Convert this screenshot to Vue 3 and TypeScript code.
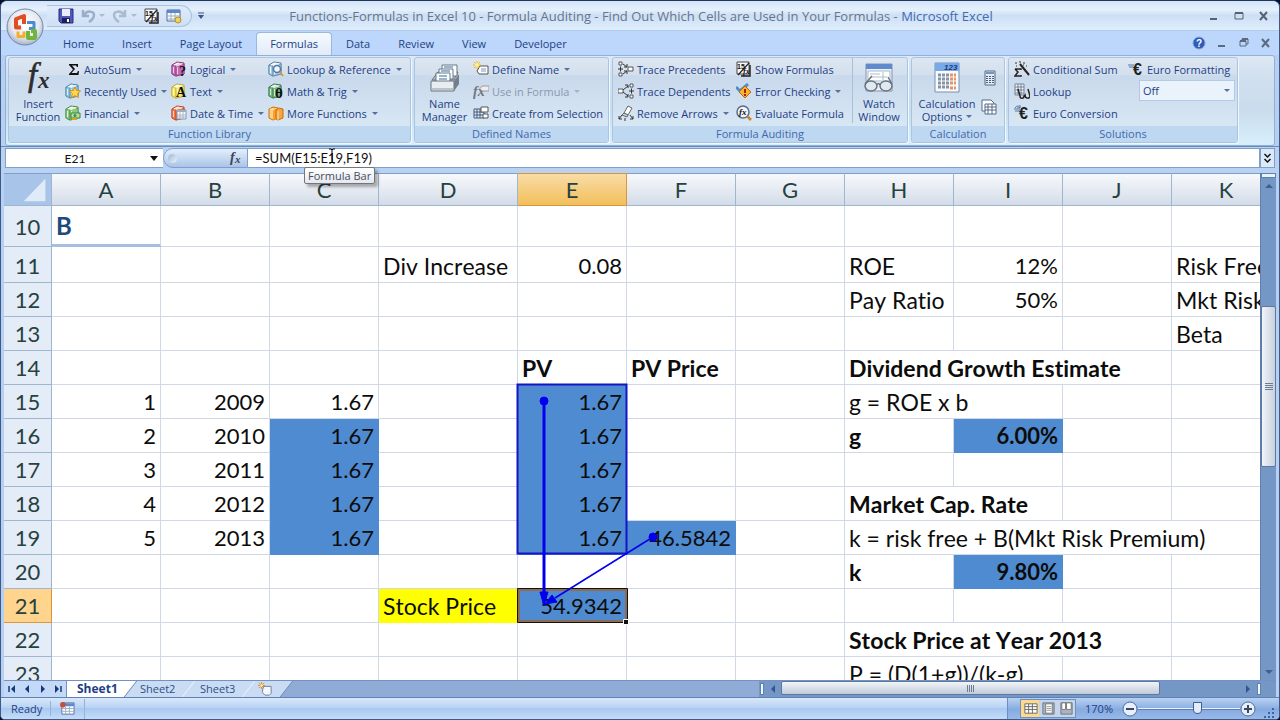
<script setup lang="ts">
import { ref } from 'vue'

interface Command { icon: string; label: string; menu?: boolean; disabled?: boolean }
interface Cell { col: string; text?: string; cls?: string; span?: number }

const book = (face: string, side: string, light: string): string =>
  `<path d="M1 4 6 1 13 2 13 13 5 15 1 13Z" fill="${light}" stroke="${side}"/><path d="M1 4 5 5 5 15 1 13Z" fill="${face}" stroke="${side}" stroke-width=".6"/><path d="M5 5 13 3 13 13 5 15Z" fill="${face}" stroke="${side}" stroke-width=".6"/><path d="M3 4 8 2M5 5 11 3" stroke="#fff" stroke-width=".8"/><path d="M6.500 6v7M2.500 6v6" stroke="${light}"/>`

const euro = `<path d="M0 4h6M1 6h5" stroke="#7f9cc6" stroke-width="1.5"/><text x="5" y="14" font-family="Liberation Sans" font-weight="bold" font-size="16" fill="#222">€</text>`

const showFormulas = `<path d="M1 1h12v12H1z" fill="#f8f8f8" stroke="#444"/><path d="M14 4v11H5" fill="none" stroke="#222" stroke-width="1.5"/><path d="M2 14 13 2" stroke="#222" stroke-width="1.2"/><text x="1" y="8" font-family="Liberation Sans" font-weight="bold" font-size="7" fill="#111">15</text><text x="7" y="13" font-family="Liberation Serif" font-style="italic" font-weight="bold" font-size="8" fill="#111">fx</text>`

const icons: Record<string, string> = {
  sum: `<path d="M4 3h9v3h-1l-1-1.500H7L10 8l-3.500 4H12l1-2h1l-.5 4H4v-1l4-4.500L4 4Z" fill="#111"/>`,
  recent: book('#8fc6e8', '#4287ab', '#d8f0fb') + `<path d="m10 4 1.600 3.400 3.900.5-2.800 2.700.7 3.900L10 12.700l-3.500 1.800.7-3.900L4.500 7.900l3.900-.5Z" fill="#ffd94a" stroke="#d78a14"/>`,
  financial: book('#8ccc7c', '#43884a', '#dff5d6') + `<path d="M6 8h9v5H6z" fill="#b8e0a4" stroke="#3d8241"/><circle cx="10" cy="10.500" r="1.500" fill="#448b48"/><path d="M7 14h5" stroke="#dca31e" stroke-width="2"/>`,
  logical: book('#c66ab5', '#853879', '#efc9e8') + `<text x="8" y="15" font-family="Liberation Serif" font-weight="bold" font-size="14" fill="#111">?</text>`,
  text: book('#f5eb62', '#bda82a', '#fffbc9') + `<text x="5" y="14" font-family="Liberation Serif" font-weight="bold" font-size="14" fill="#111">A</text>`,
  date: book('#f27b4c', '#c44222', '#ffd0b7') + `<path d="M6 5h9v9H6z" fill="#fff" stroke="#8095b1"/><path d="M6 6h9" stroke="#a4abba" stroke-width="2"/><path d="M9 7v7M12 7v7M6 10h9M6 12h9" stroke="#a7b6c9"/>`,
  lookup: book('#a9c9e7', '#527da5', '#edf7ff') + `<circle cx="9" cy="8" r="3.500" fill="#eaf7ff" stroke="#56789e" stroke-width="1.500"/><path d="m12 11 3 4" stroke="#d49b38" stroke-width="2"/>`,
  math: book('#76b484', '#34764b', '#cde8d1') + `<text x="7" y="15" font-family="Liberation Serif" font-weight="bold" font-size="15" fill="#111">θ</text>`,
  more: `<path d="m1 4 4-2 5 1v10l-5 2-4-2Z" fill="#ffd182" stroke="#c96d0b"/><path d="m5 5 5-2v10l-5 2Z" fill="#f8a032"/><path d="m8 5 3-2 4 1v9l-5 2-2-1Z" fill="#f6a640" stroke="#c96d0b"/><path d="M10 6v9M2 4l4 1" stroke="#ffe0a5"/>`,
  define: `<path d="M7 5h8v8H6L4 10Z" fill="#fff" stroke="#555"/><path d="M8 8h5M8 10h5" stroke="#7896c0"/><path d="M4 0v8M0 4h8M1 1l6 6M7 1 1 7" stroke="#efb822"/><circle cx="4" cy="4" r="2" fill="#fff18b"/>`,
  use: `<text x="0" y="13" font-family="Liberation Serif" font-style="italic" font-weight="bold" font-size="14" fill="#70767f">fx</text><path d="M9 3h7v5H9L7 5.500Z" fill="#eee" stroke="#999"/>`,
  create: `<path d="M1 4h10v9H1z" fill="#dfe8f5" stroke="#445a78"/><path d="M1 7h10M1 10h10M4 4v9M7 4v9" stroke="#445a78"/><path d="M8 2h7v5H8z" fill="#fff" stroke="#555"/><path d="M10 9h5v4h-5z" fill="#fff" stroke="#555"/>`,
  precedents: `<path d="M1 1h3v3H1zM1 12h3v3H1zM10 6h5v4h-5z" fill="#fff" stroke="#555"/><path d="M0 8h5M2.500 5.500v5M5 3l4 3M5 13l4-3M9 3v3H6M9 13v-3H6" fill="none" stroke="#333"/>`,
  dependents: `<path d="M12 1h3v3h-3zM12 12h3v3h-3zM0 6h5v4H0z" fill="#fff" stroke="#555"/><path d="M11 8h5M13.500 5.500v5M5 7l5-4M5 9l5 4M7 2h3v3M7 14h3v-3" fill="none" stroke="#333"/>`,
  remove: `<path d="m6 8 4-7 4 2-4 7Z" fill="#fff" stroke="#666"/><path d="m6 8 4 2-1 2-5-2Z" fill="#c9d2df" stroke="#666"/><path d="m4 10-3 4m0-3v3h3M7 13v3m5-6 3 4m0-3v3h-3" fill="none" stroke="#333"/>`,
  show: showFormulas,
  error: `<path d="M0 4 4 8 12 1" fill="none" stroke="#4d8fca" stroke-width="3"/><path d="m9 3 6 6-6 6-6-6Z" fill="#f7b62a" stroke="#c9620d"/><path d="M9 6v4M9 11v2" stroke="#a72016" stroke-width="2"/>`,
  evaluate: `<circle cx="7" cy="7" r="6" fill="#eff7ff" stroke="#5b6d86" stroke-width="1.500"/><path d="m11 11 4 4" stroke="#c48634" stroke-width="2.500"/><text x="3" y="10" font-family="Liberation Serif" font-style="italic" font-weight="bold" font-size="9" fill="#111">fx</text>`,
  condsum: `<path d="m6 3 9 11" stroke="#222" stroke-width="2"/><path d="M1 8h6v1M1 8l3 3-3 4h6v-1" fill="none" stroke="#222" stroke-width="1.500"/><path d="M2 1v2M6 0v2M10 1v2M2 5h1M12 5h1M9 4h1" stroke="#333"/>`,
  lookupGrid: `<path d="M1 1h9v11H1zM1 4h9M1 7h9M1 10h9M4 1v11M7 1v11" fill="#f5f7f9" stroke="#738195"/><path d="M6 13c0 3 4 3 4 0l1-1c0 4 5 4 5 1l-2-7M4 6l2 7" fill="none" stroke="#222" stroke-width="1.500"/>`,
  euro,
  euroConversion: `<path d="M1 3c2-3 4-2 5 0m0-3v3H3" fill="none" stroke="#4b6da1"/>` + euro,
  fxLarge: `<text x="7" y="24" font-family="Liberation Serif" font-style="italic" font-size="33" fill="#2c2c2c" stroke="#2c2c2c" stroke-width=".6">f</text><text x="17" y="26" font-family="Liberation Serif" font-style="italic" font-weight="bold" font-size="23" fill="#2c2c2c">x</text>`,
  manager: `<path d="m4 18 6-8h20l-4 8Z" fill="#b8c3cd" stroke="#68727d"/><path d="M14 3h15v11H14z" fill="#f9fcff" stroke="#697887"/><path d="M11 7h14v10H11z" fill="#f9fcff" stroke="#697887"/><path d="M8 11h14v10H8z" fill="#fff" stroke="#697887"/><path d="M16 5h9M13 9h9M11 14h8M11 17h8" stroke="#7e9abd" stroke-width="1.500"/><path d="M3 19h23v10H3z" fill="#e8edf1" stroke="#68727d"/><path d="m26 19 5-7v10l-5 7Z" fill="#727e88"/><path d="M4 26h21v2H4z" fill="#b8c3ca"/>`,
  watch: `<path d="M4 2h26v27H4z" fill="#edf2f8" stroke="#8294ac"/><path d="M4 2h26v5H4z" fill="#5f8bce"/><path d="M6 9h22v10H6z" fill="#fff" stroke="#a9b9cd"/><path d="M8 12h10M8 15h17M21 10v8" stroke="#aebdce"/><ellipse cx="9" cy="24" rx="6" ry="5" fill="#dce6ee" fill-opacity=".8" stroke="#687582" stroke-width="1.500"/><ellipse cx="24" cy="24" rx="6" ry="5" fill="#dce6ee" fill-opacity=".8" stroke="#687582" stroke-width="1.500"/><path d="M15 23c1-2 2-2 3 0M3 22 10 14M30 22l-4-7" fill="none" stroke="#687582" stroke-width="1.500"/>`,
  calculation: `<path d="M5 1h24v29H5z" fill="#f8fafc" stroke="#7890b0"/><path d="M5 1h24v8H5z" fill="#78a9e9"/><text x="14" y="8" font-family="Liberation Sans" font-weight="bold" font-style="italic" font-size="8" fill="#183b80">123</text><path d="M8 13h12M8 17h12M8 21h12M8 25h12" stroke="#8593aa" stroke-width="3" stroke-dasharray="3 1"/><path d="M20 13h6M20 17h6M20 21h6M20 26h6" stroke="#e3936d" stroke-width="3" stroke-dasharray="3 1"/>`,
  calcNow: `<path d="M4 1h10v14H4z" fill="#e4ebf4" stroke="#566884"/><path d="M5 3h8" stroke="#7594c3" stroke-width="2"/><path d="M6 6v8M9 6v8M12 6v8" stroke="#4c5e7e" stroke-width="2" stroke-dasharray="1 1"/>`,
  calcSheet: `<path d="M1 1h9l3 3v8H1z" fill="#fff" stroke="#566884"/><path d="M4 5h11v10H4zM4 8h11M4 11h11M7 5v10M11 5v10" fill="#fff" stroke="#566884"/>`,
  save: `<path d="M1 1h14v14H3l-2-2Z" fill="#4f57b9" stroke="#2b2b83"/><path d="M4 1h8v7H4z" fill="#e9eefb"/><path d="M4 10h8v5H4z" fill="#20204f"/><path d="M9 11h2v3H9z" fill="#fff"/>`,
  undo: `<path d="M3 2v6h6" fill="none" stroke="#98aecb" stroke-width="2.500"/><path d="M4 7c3-5 10-4 10 0 0 3-2 5-5 7" fill="none" stroke="#98aecb" stroke-width="2.500"/>`,
  redo: `<path d="M13 2v6H7" fill="none" stroke="#a8bbd3" stroke-width="2.500"/><path d="M12 7C9 2 2 3 2 7c0 3 2 5 5 7" fill="none" stroke="#a8bbd3" stroke-width="2.500"/>`,
  tableView: `<path d="M1 2h13v11H1z" fill="#fff" stroke="#4b699b"/><path d="M1 2h13v3H1z" fill="#5d89c6"/><path d="M1 8h13M1 11h13M5 5v8M9 5v8" stroke="#9aacbf"/><circle cx="12" cy="12" r="3" fill="#f1d35c" stroke="#ae922d"/>`,
  record: `<path d="M2 2h13v12H2z" fill="#fff" stroke="#55739c"/><path d="M4 4h11" stroke="#5c8bd1" stroke-width="3"/><path d="M2 8h13M2 11h13M6 6v8M10 6v8" stroke="#9aadc4"/><circle cx="3" cy="4" r="3" fill="#c54f3f"/>`,
  newSheet: `<path d="M6 5h9v8l-2 2H8l-3-3Z" fill="#f4f7fb" stroke="#69758b"/><path d="M4 0v8M0 4h8M1 1l6 6M7 1 1 7" stroke="#dd8a1d"/><circle cx="4" cy="4" r="1.500" fill="#fff0a2"/>`,
  normal: `<path d="M2 3h13v10H2zM2 6h13M2 9h13M6 3v10M10 3v10" fill="#fff" stroke="#666"/>`,
  page: `<path d="M2 2h12v12H2z" fill="#a9b3c2" stroke="#6d7683"/><path d="M5 3h7v10H5z" fill="#fff" stroke="#777"/><path d="M6 6h5M6 8h5M6 10h5" stroke="#999"/>`,
  breaks: `<path d="M2 2h12v12H2z" fill="#a9b3c2" stroke="#6d7683"/><path d="M3 2h4v7H3zM8 2h5v7H8z" fill="#fff" stroke="#777"/>`,
}

const tabs = ['Home', 'Insert', 'Page Layout', 'Formulas', 'Data', 'Review', 'View', 'Developer']
const activeTab = ref('Formulas')

const library: Command[][] = [
  [{ icon: 'sum', label: 'AutoSum', menu: true }, { icon: 'recent', label: 'Recently Used', menu: true }, { icon: 'financial', label: 'Financial', menu: true }],
  [{ icon: 'logical', label: 'Logical', menu: true }, { icon: 'text', label: 'Text', menu: true }, { icon: 'date', label: 'Date & Time', menu: true }],
  [{ icon: 'lookup', label: 'Lookup & Reference', menu: true }, { icon: 'math', label: 'Math & Trig', menu: true }, { icon: 'more', label: 'More Functions', menu: true }],
]
const names: Command[] = [{ icon: 'define', label: 'Define Name', menu: true }, { icon: 'use', label: 'Use in Formula', menu: true, disabled: true }, { icon: 'create', label: 'Create from Selection' }]
const auditing: Command[][] = [
  [{ icon: 'precedents', label: 'Trace Precedents' }, { icon: 'dependents', label: 'Trace Dependents' }, { icon: 'remove', label: 'Remove Arrows', menu: true }],
  [{ icon: 'show', label: 'Show Formulas' }, { icon: 'error', label: 'Error Checking', menu: true }, { icon: 'evaluate', label: 'Evaluate Formula' }],
]
const solutions: Command[] = [{ icon: 'condsum', label: 'Conditional Sum' }, { icon: 'lookupGrid', label: 'Lookup' }, { icon: 'euroConversion', label: 'Euro Conversion' }]

const nameBox = ref('E21')
const formula = ref('=SUM(E15:E19,F19)')
const euroFormat = ref('Off')
const zoom = ref(59)
const sheets = ['Sheet1', 'Sheet2', 'Sheet3']
const activeSheet = ref('Sheet1')

const columns = 'ABCDEFGHIJK'.split('')
const content: Record<number, Cell[]> = {
  10: [{ col: 'A', text: 'B', cls: 'title-cell' }],
  11: [{ col: 'D', text: 'Div Increase' }, { col: 'E', text: '0.08', cls: 'num' }, { col: 'H', text: 'ROE' }, { col: 'I', text: '12%', cls: 'num' }, { col: 'K', text: 'Risk Free' }],
  12: [{ col: 'H', text: 'Pay Ratio' }, { col: 'I', text: '50%', cls: 'num' }, { col: 'K', text: 'Mkt Risk' }],
  13: [{ col: 'K', text: 'Beta' }],
  14: [{ col: 'E', text: 'PV', cls: 'bold' }, { col: 'F', text: 'PV Price', cls: 'bold' }, { col: 'H', text: 'Dividend Growth Estimate', cls: 'bold', span: 3 }],
  15: [{ col: 'H', text: 'g = ROE x b', span: 2 }],
  16: [{ col: 'H', text: 'g', cls: 'bold' }, { col: 'I', text: '6.00%', cls: 'num bold fill' }],
  18: [{ col: 'H', text: 'Market Cap. Rate', cls: 'bold', span: 2 }],
  19: [{ col: 'F', text: '46.5842', cls: 'num fill' }, { col: 'H', text: 'k = risk free + B(Mkt Risk Premium)', span: 4 }],
  20: [{ col: 'H', text: 'k', cls: 'bold' }, { col: 'I', text: '9.80%', cls: 'num bold fill' }],
  21: [{ col: 'D', text: 'Stock Price', cls: 'yellow' }, { col: 'E', text: '54.9342', cls: 'num fill' }],
  22: [{ col: 'H', text: 'Stock Price at Year 2013', cls: 'bold', span: 3 }],
  23: [{ col: 'H', text: 'P = (D(1+g))/(k-g)', span: 2 }],
}
for (let i = 0; i < 5; i++) {
  const list = (content[15 + i] ??= [])
  list.push(
    { col: 'A', text: String(i + 1), cls: 'num' },
    { col: 'B', text: String(2009 + i), cls: 'num' },
    { col: 'C', text: '1.67', cls: i ? 'num fill' : 'num' },
    { col: 'E', text: '1.67', cls: 'num fill' },
  )
}

const rows = Array.from({ length: 14 }, (_, i) => {
  const n = 10 + i
  const cells: Cell[] = []
  for (let c = 0; c < columns.length; ) {
    const cell = content[n]?.find((x) => x.col === columns[c]) ?? { col: columns[c] }
    cells.push(cell)
    c += cell.span ?? 1
  }
  return { n, cells }
})
</script>

<template>
  <div class="window">
    <header class="titlebar">
      <div class="quick">
        <button class="qa" aria-label="Save"><svg viewBox="0 0 16 16" v-html="icons.save" /></button>
        <button class="qa" aria-label="Undo"><svg viewBox="0 0 16 16" v-html="icons.undo" /></button>
        <i class="caret pale" />
        <button class="qa" aria-label="Redo"><svg viewBox="0 0 16 16" v-html="icons.redo" /></button>
        <i class="caret pale" />
        <button class="qa" aria-label="Show formulas"><svg viewBox="0 0 16 16" v-html="icons.show" /></button>
        <button class="qa" aria-label="Table"><svg viewBox="0 0 16 16" v-html="icons.tableView" /></button>
      </div>
      <button class="customize" aria-label="Customize"><svg viewBox="0 0 8 8"><path d="M1 1h6" stroke="#34558b" /><path d="M1 3h6L4 7Z" fill="#34558b" /></svg></button>
      <h1>Functions-Formulas in Excel 10 - Formula Auditing - Find Out Which Cells are Used in Your Formulas - <span>Microsoft Excel</span></h1>
      <div class="controls">
        <button aria-label="Minimize"><svg viewBox="0 0 12 12"><path d="M2 9h7" stroke="#566273" stroke-width="2" /></svg></button>
        <button aria-label="Maximize"><svg viewBox="0 0 12 12"><path d="M2 3h8v6H2z" fill="none" stroke="#566273" /><path d="M2 3h8" stroke="#566273" stroke-width="2" /></svg></button>
        <button aria-label="Close"><svg viewBox="0 0 12 12"><path d="m2 2 7 8M9 2l-7 8" stroke="#566273" stroke-width="2" /></svg></button>
      </div>
    </header>
    <button class="office" aria-label="Office Button">
      <svg viewBox="0 0 38 38">
        <defs>
          <radialGradient id="orb" cx=".5" cy=".4" r=".6"><stop offset="0" stop-color="#fff" /><stop offset=".65" stop-color="#e6e9ef" /><stop offset="1" stop-color="#a8b3c6" /></radialGradient>
        </defs>
        <circle cx="19" cy="19" r="18" fill="url(#orb)" stroke="#7486a5" />
        <g fill="none" stroke-linejoin="round">
          <path d="M15 19.500h-5V11l8-3v8" stroke="#df4f22" stroke-width="4" />
          <path d="M21 14.500h7v6h-5" stroke="#4c8bd2" stroke-width="3" />
          <path d="M12 23.500v5h6v-5" stroke="#f0af2e" stroke-width="3" />
          <path d="M22 23v7h7v-7h-4" stroke="#71b63a" stroke-width="4" />
        </g>
        <path d="M17 17h5v5h-5z" fill="#fff" />
      </svg>
    </button>
    <nav class="tabs">
      <button v-for="t in tabs" :key="t" :class="{ active: t === activeTab }" @click="activeTab = t">{{ t }}</button>
      <div class="controls lower">
        <button aria-label="Help"><svg viewBox="0 0 14 14"><circle cx="7" cy="7" r="6" fill="#2e5cb8" stroke="#7fa5dd" /><text x="4" y="11" font-family="Liberation Sans" font-weight="bold" font-size="10" fill="#fff">?</text></svg></button>
        <button aria-label="Minimize workbook"><svg viewBox="0 0 12 12"><path d="M2 9h7" stroke="#5a6a80" stroke-width="2" /></svg></button>
        <button aria-label="Restore workbook"><svg viewBox="0 0 12 12"><path d="M2 4h6v5H2zM4 4V2h6v5H8" fill="none" stroke="#5a6a80" /><path d="M2 4h6M4 2h6" stroke="#5a6a80" stroke-width="2" /></svg></button>
        <button aria-label="Close workbook"><svg viewBox="0 0 12 12"><path d="m2 2 7 8M9 2l-7 8" stroke="#5a6a80" stroke-width="2" /></svg></button>
      </div>
    </nav>

    <section class="ribbon">
      <div class="group g-library">
        <div class="tools">
          <button class="big"><svg viewBox="0 0 34 32" v-html="icons.fxLarge" /><span>Insert</span><span>Function</span></button>
          <div v-for="(col, i) in library" :key="i" class="stack">
            <button v-for="c in col" :key="c.label" class="cmd"><svg viewBox="0 0 16 16" v-html="icons[c.icon]" /><span>{{ c.label }}</span><i v-if="c.menu" class="caret" /></button>
          </div>
        </div>
        <footer>Function Library</footer>
      </div>
      <div class="group g-names">
        <div class="tools">
          <button class="big"><svg viewBox="0 0 34 32" v-html="icons.manager" /><span>Name</span><span>Manager</span></button>
          <div class="stack">
            <button v-for="c in names" :key="c.label" class="cmd" :disabled="c.disabled"><svg viewBox="0 0 16 16" v-html="icons[c.icon]" /><span>{{ c.label }}</span><i v-if="c.menu" class="caret" /></button>
          </div>
        </div>
        <footer>Defined Names</footer>
      </div>
      <div class="group g-audit">
        <div class="tools">
          <div v-for="(col, i) in auditing" :key="i" class="stack">
            <button v-for="c in col" :key="c.label" class="cmd"><svg viewBox="0 0 16 16" v-html="icons[c.icon]" /><span>{{ c.label }}</span><i v-if="c.menu" class="caret" /></button>
          </div>
          <button class="big divided"><svg viewBox="0 0 34 32" v-html="icons.watch" /><span>Watch</span><span>Window</span></button>
        </div>
        <footer>Formula Auditing</footer>
      </div>
      <div class="group g-calc">
        <div class="tools">
          <button class="big"><svg viewBox="0 0 34 32" v-html="icons.calculation" /><span>Calculation</span><span class="inline">Options<i class="caret" /></span></button>
          <div class="pair">
            <button aria-label="Calculate Now"><svg viewBox="0 0 16 16" v-html="icons.calcNow" /></button>
            <button aria-label="Calculate Sheet"><svg viewBox="0 0 16 16" v-html="icons.calcSheet" /></button>
          </div>
        </div>
        <footer>Calculation</footer>
      </div>
      <div class="group g-solutions">
        <div class="tools">
          <div class="stack">
            <button v-for="c in solutions" :key="c.label" class="cmd"><svg viewBox="0 0 16 16" v-html="icons[c.icon]" /><span>{{ c.label }}</span></button>
          </div>
          <div class="stack">
            <label class="cmd" for="euro-format"><svg viewBox="0 0 16 16" v-html="icons.euro" /><span>Euro Formatting</span></label>
            <div class="select">
              <select id="euro-format" v-model="euroFormat"><option>Off</option><option>On</option></select>
              <i class="caret" />
            </div>
          </div>
        </div>
        <footer>Solutions</footer>
      </div>
    </section>

    <section class="formula-bar">
      <div class="name-box">
        <input v-model="nameBox" aria-label="Name Box" />
        <svg viewBox="0 0 8 5"><path d="M0 0h8L4 5Z" fill="#111" /></svg>
      </div>
      <div class="fx">
        <i class="knob" />
        <button aria-label="Insert Function">
          <svg viewBox="0 0 16 16"><text x="3" y="12" font-family="Liberation Serif" font-style="italic" font-weight="bold" font-size="14" fill="#3b4558">f</text><text x="8" y="13" font-family="Liberation Serif" font-style="italic" font-weight="bold" font-size="11" fill="#3b4558">x</text></svg>
        </button>
      </div>
      <input v-model="formula" class="formula" aria-label="Formula Bar" />
      <button class="expand" aria-label="Expand Formula Bar"><svg viewBox="0 0 10 12"><path d="m2 2 3 3 3-3M2 7l3 3 3-3" fill="none" stroke="#111" stroke-width="1.500" /></svg></button>
      <div class="tooltip">Formula Bar</div>
      <svg class="ibeam" viewBox="0 0 8 16"><path d="M1 1h2l1 1 1-1h2M4 2v12M1 15h2l1-1 1 1h2" fill="none" stroke="#000" /></svg>
    </section>

    <main class="work">
      <div class="sheet">
        <table>
          <colgroup>
            <col class="w-head" />
            <col v-for="c in columns" :key="c" :class="c === 'D' ? 'w-wide' : 'w-col'" />
          </colgroup>
          <thead>
            <tr>
              <th class="corner"><svg viewBox="0 0 48 33"><path d="M43 5v24H20Z" fill="#dfebf9" /></svg></th>
              <th v-for="c in columns" :key="c" scope="col" :class="{ hot: c === 'E' }">{{ c }}</th>
            </tr>
          </thead>
          <tbody>
            <tr v-for="r in rows" :key="r.n" :class="'r' + r.n">
              <th scope="row" :class="{ hot: r.n === 21 }">{{ r.n }}</th>
              <td v-for="c in r.cells" :key="c.col" :class="c.cls" :colspan="c.span ?? 1">{{ c.text }}</td>
            </tr>
          </tbody>
        </table>
        <svg class="traces" viewBox="0 0 760 460" width="760" height="460">
          <path d="M513.500 211.500h109v169h-109z" fill="none" stroke="#1515c8" stroke-width="2" />
          <path d="M513.500 415.500h110v34h-110z" fill="none" stroke="#111" />
          <path d="M515 417h107v31H515z" fill="none" stroke="#8e6b52" stroke-width="2" />
          <path d="M619.500 446.500h5v5h-5z" fill="#111" stroke="#fff" />
          <g stroke="#00e" fill="#00e">
            <circle cx="540" cy="228" r="4" /><path d="M540 228v196" stroke-width="3" /><path d="M536 419h8l-4 14Z" />
            <circle cx="649" cy="364" r="4" /><path d="M649 364 551 425" stroke-width="1.500" /><path d="m541 431 7-9 5 7Z" />
          </g>
        </svg>
      </div>
      <div class="vscroll">
        <i class="split" />
        <button aria-label="Scroll up"><svg viewBox="0 0 10 6"><path d="M1 5h8L5 1Z" fill="#3f5f8c" /></svg></button>
        <div class="vtrack"><div class="vthumb"><i /></div></div>
        <button aria-label="Scroll down"><svg viewBox="0 0 10 6"><path d="M1 1h8L5 5Z" fill="#3f5f8c" /></svg></button>
      </div>
    </main>

    <nav class="sheetbar">
      <div class="steps">
        <button aria-label="First sheet"><svg viewBox="0 0 8 8"><path d="M1 1v6" stroke="#15387a" stroke-width="1.500" /><path d="M7 0v8L3 4Z" fill="#15387a" /></svg></button>
        <button aria-label="Previous sheet"><svg viewBox="0 0 8 8"><path d="M6 0v8L2 4Z" fill="#15387a" /></svg></button>
        <button aria-label="Next sheet"><svg viewBox="0 0 8 8"><path d="M2 0v8l4-4Z" fill="#15387a" /></svg></button>
        <button aria-label="Last sheet"><svg viewBox="0 0 8 8"><path d="M7 1v6" stroke="#15387a" stroke-width="1.500" /><path d="M1 0v8l4-4Z" fill="#15387a" /></svg></button>
      </div>
      <div class="sheets">
        <button v-for="s in sheets" :key="s" :class="{ active: s === activeSheet }" @click="activeSheet = s"><span>{{ s }}</span></button>
        <button class="new" aria-label="Insert Worksheet"><svg viewBox="0 0 16 16" v-html="icons.newSheet" /></button>
      </div>
      <div class="hscroll">
        <i class="grip" />
        <button aria-label="Scroll left"><svg viewBox="0 0 6 8"><path d="M5 0v8L1 4Z" fill="#34558b" /></svg></button>
        <div class="htrack"><div class="hthumb"><i /></div></div>
        <button aria-label="Scroll right"><svg viewBox="0 0 6 8"><path d="M1 0v8l4-4Z" fill="#34558b" /></svg></button>
        <i class="grip" />
      </div>
    </nav>

    <footer class="status">
      <span class="ready">Ready</span>
      <button class="record" aria-label="Record Macro"><svg viewBox="0 0 16 16" v-html="icons.record" /></button>
      <div class="view-tools">
        <div class="views">
          <button class="on" aria-label="Normal"><svg viewBox="0 0 16 16" v-html="icons.normal" /></button>
          <button aria-label="Page Layout view"><svg viewBox="0 0 16 16" v-html="icons.page" /></button>
          <button aria-label="Page Break Preview"><svg viewBox="0 0 16 16" v-html="icons.breaks" /></button>
        </div>
        <label for="zoom">170%</label>
        <button class="round" aria-label="Zoom out"><svg viewBox="0 0 16 16"><circle cx="8" cy="8" r="7" fill="#e8eff9" stroke="#506d9b" /><path d="M4 8h8" stroke="#34496c" stroke-width="2" /></svg></button>
        <input id="zoom" v-model="zoom" type="range" min="0" max="100" />
        <button class="round" aria-label="Zoom in"><svg viewBox="0 0 16 16"><circle cx="8" cy="8" r="7" fill="#e8eff9" stroke="#506d9b" /><path d="M4 8h8M8 4v8" stroke="#34496c" stroke-width="2" /></svg></button>
        <svg class="resize" viewBox="0 0 12 12"><path d="M9 2h2M5 6h2M9 6h2M1 10h2M5 10h2M9 10h2" stroke="#3f62a0" stroke-width="2" /></svg>
      </div>
    </footer>
  </div>
</template>

<style>
body { margin: 0; background: #06112a; }
</style>

<style scoped>
* { box-sizing: border-box; }
button, input, select { font: inherit; color: inherit; margin: 0; padding: 0; border: 0; background: none; }
svg { display: block; flex: none; }
i { font-style: normal; }

.window {
  position: relative;
  display: flex;
  flex-direction: column;
  height: 100vh;
  overflow: hidden;
  border: 1px solid #3d5a86;
  border-top-color: #20355a;
  border-radius: 7px 7px 5px 5px;
  background: #b5d0f3;
  font-family: "Open Sans", "Noto Sans", sans-serif;
  font-size: 11px;
  color: #1e3f85;
}

.titlebar {
  display: flex;
  align-items: center;
  height: 30px;
  flex: none;
  padding: 0 9px 0 46px;
  background: linear-gradient(#d3e4f8 0, #e5f0fc 30%, #cddff4 50%, #dfeefe 100%);
  border-bottom: 1px solid #b3cbea;
}
.quick {
  display: flex;
  align-items: center;
  height: 22px;
  width: 145px;
  padding-left: 8px;
  border: 1px solid #a9c3e5;
  border-left: 0;
  border-radius: 0 11px 11px 0;
  background: linear-gradient(#dfebfa, #cfe0f5);
}
.qa { padding: 0 3px; }
.qa svg { width: 16px; height: 16px; }
.quick .caret { margin: 0 4px 0 0; }
.customize { padding: 0 5px; }
.customize svg { width: 8px; height: 8px; }
h1 { flex: 1; margin: 0 136px 0 0; text-align: center; font: 400 13px "Open Sans", sans-serif; color: #66758c; white-space: nowrap; }
h1 span { color: #3f6bb0; }
.controls { display: flex; gap: 13px; }
.controls svg { width: 12px; height: 12px; }
.office { position: absolute; left: 5px; top: 7px; z-index: 2; }
.office svg { width: 38px; height: 38px; }

.caret {
  flex: none;
  width: 0;
  height: 0;
  margin-left: 5px;
  border: 3px solid transparent;
  border-top-color: #53709f;
  border-bottom: 0;
}
.caret.pale { border-top-color: #a5b9d6; }

.tabs { display: flex; height: 24px; flex: none; align-items: flex-end; padding: 0 6px 0 48px; background: #bcd7fb; }
.tabs > button { height: 23px; padding: 0 13px 2px; border: 1px solid transparent; border-bottom: 0; border-radius: 4px 4px 0 0; white-space: nowrap; }
.tabs > .active { background: linear-gradient(#f5faff, #e1ebf7); border-color: #9ab8dd; }
.controls.lower { align-self: center; margin-left: auto; gap: 10px; align-items: center; padding-right: 1px; }
.controls.lower button:first-child svg { width: 14px; height: 14px; }

.ribbon {
  display: flex;
  gap: 3px;
  height: 91px;
  flex: none;
  margin: 0 4px;
  padding: 1px 2px 2px;
  border: 1px solid #8fb0d8;
  border-radius: 3px;
  background: linear-gradient(#dfe9f5 0, #d2e0ef 20%, #c9dced 60%, #d8effb 100%);
}
.group {
  display: flex;
  flex-direction: column;
  flex: none;
  border: 1px solid #a9c5e4;
  border-radius: 3px;
  background: linear-gradient(#dde7f3 0, #d3dfed 20%, #c9d9ec 21%, #dcebf6 100%);
  box-shadow: 1px 1px 0 #f0f8ff;
  overflow: hidden;
}
.tools { display: grid; flex: 1; padding: 0 4px; align-items: start; }
.group > footer { height: 16px; line-height: 15px; text-align: center; background: #bfd8f1; color: #4268ad; }
.g-library { width: 403px; }
.g-names { width: 195px; }
.g-audit { width: 296px; }
.g-calc { width: 94px; }
.g-solutions { width: 230px; }
.big { display: flex; flex-direction: column; align-items: center; line-height: 13px; text-align: center; white-space: nowrap; padding-top: 4px; }
.big svg { width: 34px; height: 32px; margin-bottom: 3px; }
.inline { display: flex; align-items: center; }
.inline .caret { margin-left: 4px; }
.stack { display: flex; flex-direction: column; }
.cmd { display: flex; align-items: center; height: 22px; white-space: nowrap; text-align: left; }
.cmd svg { width: 16px; height: 16px; margin-right: 3px; }
.cmd:disabled { color: #8b98ae; }
.cmd:disabled .caret { border-top-color: #a6b3c6; }
.g-library .tools { grid-template-columns: 54px 106px 97px 1fr; padding: 0 0 0 2px; }
.g-names .tools { grid-template-columns: 57px 1fr; padding: 0 0 0 1px; }
.g-audit .tools { grid-template-columns: 118px 116px 1fr; padding: 0 2px 0 5px; }
.g-calc .tools { grid-template-columns: 62px 1fr; }
.g-solutions .tools { grid-template-columns: 114px 1fr; padding: 0 2px 0 5px; }
.divided { border-left: 1px solid #a9c0dc; }
.pair { display: flex; flex-direction: column; gap: 13px; padding: 12px 0 0 3px; }
.pair svg { width: 16px; height: 16px; }
.select { display: flex; align-items: center; height: 21px; margin-left: 11px; border: 1px solid #b3cae6; background: #eaf2fb; }
.select select { flex: 1; appearance: none; padding-left: 3px; }
.select .caret { margin-right: 4px; }

.formula-bar {
  position: relative;
  z-index: 3;
  display: flex;
  height: 27px;
  flex: none;
  padding: 1px 4px 5px 4px;
  background: #b9d2f2;
  color: #111;
  font-family: Lato, "Liberation Sans", sans-serif;
  font-size: 12px;
  font-kerning: none;
  border-top: 1px solid #6a8ab8;
}
.name-box { display: flex; align-items: center; width: 158px; background: #fff; border: 1px solid #7f9fca; border-right: 0; padding-right: 5px; }
.name-box input { flex: 1; width: 0; padding-right: 6px; text-align: center; }
.name-box svg { width: 8px; height: 5px; }
.fx { display: flex; align-items: center; justify-content: space-between; width: 85px; padding: 0 4px; background: linear-gradient(#e4effc, #a9c4e8); border: 1px solid #7f9fca; border-radius: 10px 0 0 10px; }
.knob { width: 9px; height: 9px; border-radius: 50%; background: linear-gradient(135deg, #9cb5d8, #eef5fd); }
.fx svg { width: 16px; height: 16px; }
.formula { flex: 1; padding-left: 7px; background: #fff; border: 1px solid #7f9fca; border-left: 0; font-size: 13px; }
.expand { width: 15px; border: 1px solid #7f9fca; background: #dce9f8; }
.expand svg { width: 11px; height: 12px; margin: 0 auto; }
.tooltip {
  position: absolute;
  left: 303px;
  top: 20px;
  padding: 0 3px;
  font: 11px/15px "Open Sans", sans-serif;
  color: #4a4f58;
  background: linear-gradient(#fff, #e5e8f2);
  border: 1px solid #767676;
  border-radius: 2px;
  box-shadow: 3px 3px 3px rgba(0, 0, 0, .3);
}
.ibeam { position: absolute; left: 327px; top: 1px; width: 8px; height: 16px; }

.work { display: flex; flex: 1; min-height: 0; padding: 0 3px; }
.sheet { position: relative; flex: 1; min-width: 0; overflow: hidden; background: #fff; }
table { table-layout: fixed; width: 1277px; border-collapse: separate; border-spacing: 0; font: 23px/28px Lato, sans-serif; font-kerning: none; font-variant-ligatures: none; color: #0c0c0c; }
.w-head { width: 48px; }
.w-col { width: 109px; }
.w-wide { width: 139px; }
th, td { height: 34px; padding: 0 4px; border-right: 1px solid #d0d7e5; border-bottom: 1px solid #d0d7e5; overflow: hidden; white-space: nowrap; text-align: left; vertical-align: middle; }
th { font-size: 22px; font-weight: 400; text-align: center; color: #27413e; border-color: #9eb6ce; }
thead th { height: 33px; border-top: 1px solid #7f9fc6; background: linear-gradient(#f6f9fc, #dfe5ee 70%, #d2dbe8); }
tbody th { background: #e4ecf7; }
thead .hot { background: linear-gradient(#f9dca6, #f2bf5c); border-color: #d9963b; }
tbody .hot { background: #ffd58d; border-color: #d9963b; }
thead .corner { padding: 0; background: #a9c4e9; }
.corner svg { width: 47px; height: 31px; }
.r10 th, .r10 td { height: 41px; padding-top: 2px; }
.r11 th, .r11 td { height: 36px; padding-top: 2px; }
.num { text-align: right; font-size: 22px; }
.bold { font-weight: 700; }
.fill { background: #4f8bd0; border-color: #4f8bd0; }
.yellow { background: #ff0; border-color: #ff0; }
.title-cell { font-weight: 700; font-size: 24px; color: #1f497d; border-bottom: 3px solid #a7bfde; }
.traces { position: absolute; left: 0; top: 0; }

.vscroll { display: flex; flex-direction: column; width: 16px; background: #7597c5; border-left: 1px solid #5f81b0; }
.vscroll button { display: flex; justify-content: center; align-items: center; height: 16px; }
.vscroll svg { width: 10px; height: 6px; }
.split { height: 5px; background: #eaf2fc; border: 1px solid #5f81b0; }
.vtrack { flex: 1; display: grid; grid-template-rows: 112fr 161fr 197fr; }
.vthumb, .hthumb { display: flex; align-items: center; justify-content: center; border: 1px solid #5f78a0; border-radius: 2px; }
.vthumb { grid-row: 2; background: linear-gradient(90deg, #f2f5f9, #c7d0dd); }
.vthumb i { width: 8px; height: 7px; background: repeating-linear-gradient(#6c7c94 0 1px, transparent 1px 2px); }

.sheetbar { display: flex; height: 17px; flex: none; margin: 0 3px; background: #8fabd6; border-top: 1px solid #7392c0; }
.steps { display: flex; width: 63px; align-items: center; justify-content: space-around; background: #c3d9f5; border-right: 1px solid #7392c0; }
.steps svg { width: 8px; height: 8px; }
.sheets { display: flex; flex: 1; }
.sheets button { position: relative; height: 16px; width: 60px; padding: 0 0 1px 12px; line-height: 14px; text-align: left; color: #2e4f85; }
.sheets button::before { content: ""; position: absolute; inset: 0 -3px 0 0; transform: skewX(-38deg); background: #c9dcf4; border-right: 1px solid #5f81b0; border-left: 1px solid #eef5fd; }
.sheets button span, .sheets button svg { position: relative; }
.sheets .active { width: 61px; padding-left: 10px; font-size: 12px; font-weight: 700; color: #1e3f85; z-index: 1; }
.sheets .active::before { background: #fff; left: 6px; }
.sheets .active::after { content: ""; position: absolute; left: 0; top: 0; width: 14px; height: 16px; background: #fff; }
.sheets .active span { z-index: 1; }
.sheets .new { width: 36px; padding-left: 10px; }
.sheets .new svg { width: 14px; height: 14px; }
.hscroll { display: flex; width: 517px; padding-right: 14px; background: #7597c5; }
.hscroll button { display: flex; align-items: center; justify-content: center; width: 16px; }
.hscroll svg { width: 6px; height: 8px; }
.grip { width: 4px; margin: 2px 1px; background: #f1f7ff; border: 1px solid #5f81b0; }
.htrack { flex: 1; display: grid; grid-template-columns: 1fr 80px; }
.hthumb { height: 14px; background: linear-gradient(#f2f5f9, #bfcad9); }
.hthumb i { width: 7px; height: 7px; background: repeating-linear-gradient(90deg, #6c7c94 0 1px, transparent 1px 2px); }

.status { display: flex; align-items: center; height: 22px; flex: none; border-top: 1px solid #5c82b8; background: linear-gradient(#d9e8fa, #b9d3f4 45%, #a9c8f0 50%, #c5dcf8); }
.ready { width: 50px; padding-left: 10px; border-right: 1px solid #94b3dc; }
.record { width: 34px; height: 20px; padding-left: 9px; border-right: 1px solid #94b3dc; }
.record svg { width: 15px; height: 15px; }
.view-tools { display: flex; align-items: center; height: 21px; width: 272px; margin-left: auto; padding: 0 4px 0 12px; border-left: 1px solid #6a8fc6; background: linear-gradient(#b9d1f2, #86abe0 55%, #98bae9); }
.views { display: flex; border: 1px solid #6f8fc0; }
.views button { width: 18px; height: 17px; background: #c5d5eb; }
.views .on { background: #ffd98a; }
.views svg { width: 15px; height: 15px; margin: 0 auto; }
.view-tools label { width: 46px; text-align: center; }
.round svg { width: 16px; height: 16px; }
#zoom { flex: 1; min-width: 0; height: 16px; appearance: none; }
#zoom::-webkit-slider-runnable-track { height: 1px; background: #e8f1ff; box-shadow: 0 1px 0 #5b7fb8; }
#zoom::-webkit-slider-thumb { appearance: none; width: 9px; height: 12px; margin-top: -6px; background: #e3ecf8; border: 1px solid #3f5f95; border-radius: 1px 1px 5px 5px; }
.resize { width: 12px; height: 12px; margin-left: 7px; align-self: flex-end; }
</style>
